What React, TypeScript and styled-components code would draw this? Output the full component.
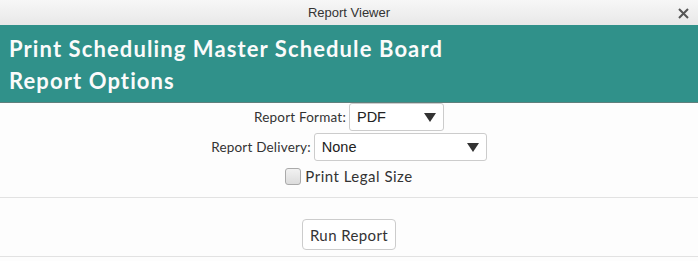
import React from "react";
import styled, { createGlobalStyle } from "styled-components";

const GlobalStyle = createGlobalStyle`
  html, body {
    margin: 0;
    padding: 0;
    background: #ffffff;
  }
  body {
    font-family: Lato, "Liberation Sans", sans-serif;
  }
`;

const Dialog = styled.div`
  width: 698px;
  height: 261px;
  display: flex;
  flex-direction: column;
  background: #fdfdfd;
  overflow: hidden;
`;

const TitleBar = styled.div`
  height: 25px;
  flex: none;
  display: flex;
  align-items: center;
  justify-content: center;
  position: relative;
  background: linear-gradient(#f7f7f7, #e8e8e8);
  font-family: "Liberation Sans", Arial, sans-serif;
  font-size: 13px;
  color: #333;
`;

const CloseButton = styled.button`
  position: absolute;
  right: 9px;
  top: 7px;
  width: 12px;
  height: 12px;
  padding: 0;
  border: 0;
  background: none;
  display: flex;
  align-items: center;
  justify-content: center;
  cursor: pointer;
`;

const Header = styled.div`
  flex: none;
  height: 78px;
  box-sizing: border-box;
  padding: 8px 9px 0;
  background: #30918a;
  border-bottom: 1px solid #5f7f7c;
  color: #fbfbfb;
  font-family: Lato, sans-serif;
  font-weight: 700;
  font-size: 22px;
  letter-spacing: 1.1px;
  line-height: 32px;
`;

const Form = styled.div`
  display: flex;
  flex-direction: column;
  align-items: center;
  gap: 2px;
  border-bottom: 1px solid #e2e2e2;
  padding-bottom: 12px;
`;

const Row = styled.label`
  display: flex;
  align-items: center;
  gap: 3px;
  font-size: 13.5px;
  letter-spacing: 0.2px;
  color: #333;
`;

const Select = styled.div<{ $width: number }>`
  width: ${(p) => p.$width}px;
  height: 28px;
  box-sizing: border-box;
  border: 1px solid #ccc;
  border-radius: 3px;
  background: #fff;
  display: flex;
  align-items: center;
  justify-content: space-between;
  padding: 0 7px 0 7px;
  font-family: "Liberation Sans", Arial, sans-serif;
  font-size: 14.5px;
  letter-spacing: 0;
  color: #222;
`;

const Caret = styled.span`
  width: 0;
  height: 0;
  border-left: 6px solid transparent;
  border-right: 6px solid transparent;
  border-top: 9px solid #333;
`;

const CheckRow = styled.label`
  display: flex;
  align-items: center;
  gap: 4px;
  margin-top: 4px;
  font-size: 15px;
  letter-spacing: 0.5px;
  color: #333;
`;

const Box = styled.span`
  width: 14px;
  height: 15px;
  border: 1px solid #aaa;
  border-radius: 3px;
  background: linear-gradient(#f2f2f2, #dcdcdc);
`;

const Footer = styled.div`
  display: flex;
  justify-content: center;
  padding: 21px 0 6px;
  border-bottom: 1px solid #e2e2e2;
`;

const Button = styled.button`
  width: 94px;
  height: 31px;
  border: 1px solid #ccc;
  border-radius: 4px;
  background: #fff;
  font-family: Lato, sans-serif;
  font-size: 15px;
  letter-spacing: 0.4px;
  color: #333;
  cursor: pointer;
`;

export default function App() {
  return (
    <>
      <GlobalStyle />
      <Dialog>
        <TitleBar>
          Report Viewer
          <CloseButton aria-label="Close">
            <svg width="11" height="11" viewBox="0 0 11 11">
              <path d="M1 1 L10 10 M10 1 L1 10" stroke="#555" strokeWidth="2" />
            </svg>
          </CloseButton>
        </TitleBar>
        <Header>
          Print Scheduling Master Schedule Board
          <br />
          Report Options
        </Header>
        <Form>
          <Row>
            Report Format:
            <Select $width={95}>
              PDF
              <Caret />
            </Select>
          </Row>
          <Row>
            Report Delivery:
            <Select $width={173}>
              None
              <Caret />
            </Select>
          </Row>
          <CheckRow>
            <Box />
            Print Legal Size
          </CheckRow>
        </Form>
        <Footer>
          <Button>Run Report</Button>
        </Footer>
      </Dialog>
    </>
  );
}
